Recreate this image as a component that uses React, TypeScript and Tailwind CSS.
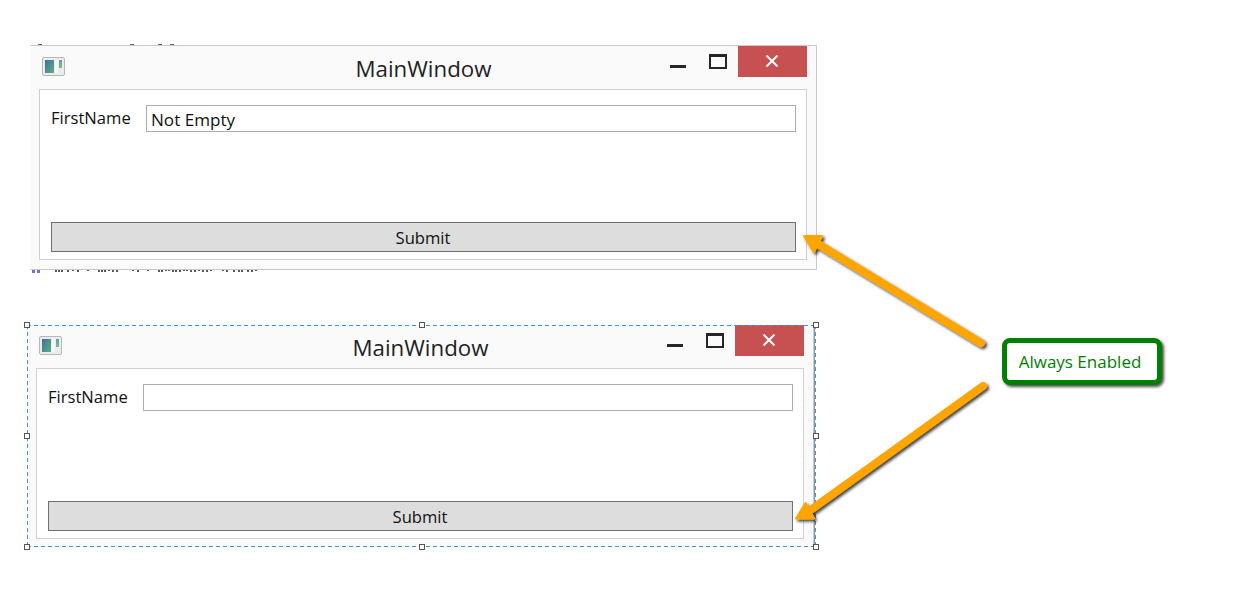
const font = "font-['Open_Sans','Noto_Sans',sans-serif]";

// leftovers of the editor text that peeks out above and below the first window
const topSpecks = [38, 40, 130, 132, 158, 160, 170, 172];
const bottomSpecks = [
  55, 58, 61, 67, 72, 77, 87, 98, 101, 104, 108, 112, 116, 132, 137, 147, 158, 161, 165, 168, 172, 175, 179,
  183, 186, 190, 194, 198, 202, 206, 210, 222, 226, 233, 238, 241, 247, 251, 255,
];

function AppIcon() {
  return (
    <div className="flex h-[19px] w-[23px] gap-[1px] rounded-[2px] border border-[#b4b8bc] bg-[#ececec] p-[2px]">
      <div className="h-full w-[10px] bg-gradient-to-br from-[#41709c] to-[#5fae7c]" />
      <div className="h-full w-[4px] bg-[#f7f7f7]" />
      <div className="h-[8px] w-[3px] bg-gradient-to-b from-[#6a9aae] to-[#74c090]" />
    </div>
  );
}

function DesignerWindow({ value }: { value: string }) {
  return (
    <div className={`flex h-[225px] w-[787px] flex-col border border-[#c9c9c9] border-l-[#fafafa] bg-[#fafafa] ${font}`}>
      <div className="grid h-[43px] shrink-0 grid-cols-[1fr_auto_1fr]">
        <div className="pl-[11px] pt-[11px]">
          <AppIcon />
        </div>
        <div className="pt-[7px] text-[22.3px] leading-[32px] text-[#222222]">MainWindow</div>
        <div className="flex items-start justify-end pr-[9px]">
          <div className="mt-[19px] h-[3px] w-[16px] bg-[#262626]" />
          <div className="ml-[23px] mt-[8px] h-[15px] w-[18px] border-2 border-t-[3px] border-[#262626]" />
          <div className="ml-[11px] flex h-[31px] w-[69px] items-center justify-center bg-[#c75050] pb-[1px] pr-[1px]">
            <svg width="14" height="12" viewBox="0 0 14 12">
              <path d="M1.5 0.5 12.5 11.5M12.5 0.5 1.5 11.5" stroke="#ffffff" strokeWidth="2" fill="none" />
            </svg>
          </div>
        </div>
      </div>
      <div className="ml-[8px] mr-[9px] flex h-[171px] flex-col justify-between border border-[#d0d0d0] bg-white pb-[7px] pl-[11px] pr-[10px] pt-[15px]">
        <div className="flex h-[27px] items-start">
          <div className="w-[95px] text-[16.6px] leading-[25px] text-[#111111]">FirstName</div>
          <div className="h-[27px] flex-1 border border-[#abadb3] bg-white pl-[4px] text-[17.1px] leading-[27px] text-[#111111]">{value}</div>
        </div>
        <div className="h-[30px] border border-[#707070] bg-[#dddddd] pr-[1px] text-center text-[16.6px] leading-[29px] text-[#111111]">Submit</div>
      </div>
    </div>
  );
}

function Handle({ className }: { className: string }) {
  return <div className={`absolute h-[6px] w-[6px] border border-[#555555] bg-white ${className}`} />;
}

function Overlay() {
  return (
    <svg className="pointer-events-none absolute left-0 top-0" width="1252" height="604">
      <defs>
        <filter id="sh" x="-10%" y="-10%" width="120%" height="120%">
          <feDropShadow dx="2" dy="2" stdDeviation="1.5" floodColor="#000000" floodOpacity="0.75" />
        </filter>
      </defs>
      {topSpecks.map((x, i) => (
        <rect key={x} x={x} y="44" width="2" height="1" fill={i % 2 ? "#2a5a9a" : "#b5651d"} />
      ))}
      <rect x="32" y="270" width="3" height="3" fill="#3030e0" opacity="0.7" />
      <rect x="37" y="270" width="3" height="3" fill="#3030e0" opacity="0.7" />
      {bottomSpecks.map((x) => (
        <rect key={x} x={x} y="270" width="2" height={x % 3 ? 2 : 1} fill="#222222" opacity="0.75" />
      ))}
      <g filter="url(#sh)">
        <path d="M981 343 818 244" stroke="#ffa500" strokeWidth="8" strokeLinecap="round" fill="none" />
        <path d="M804 236 822 236 814 252Z" fill="#ffa500" stroke="#ffa500" strokeWidth="2" strokeLinejoin="round" />
      </g>
      <g filter="url(#sh)">
        <path d="M983 386 812 509" stroke="#ffa500" strokeWidth="8" strokeLinecap="round" fill="none" />
        <path d="M796 518.5 805.5 503 814 518.5Z" fill="#ffa500" stroke="#ffa500" strokeWidth="2" strokeLinejoin="round" />
      </g>
    </svg>
  );
}

export default function App() {
  return (
    <div className="relative h-[604px] w-[1252px] overflow-hidden bg-white">
      <div className="pl-[30px] pt-[45px]">
        <DesignerWindow value="Not Empty" />
      </div>
      <div className="relative ml-[27px] mt-[55px] h-[222px] w-[789px]">
        <div className="h-full overflow-hidden">
          <div className="-mt-[1px]">
            <DesignerWindow value="" />
          </div>
        </div>
        <div className="absolute left-0 right-0 top-0 h-[1px] bg-[repeating-linear-gradient(90deg,#3d95e6_0_4px,transparent_4px_7px)]" />
        <div className="absolute bottom-0 left-0 right-0 h-[1px] bg-[repeating-linear-gradient(90deg,#3d95e6_0_4px,transparent_4px_7px)]" />
        <div className="absolute bottom-0 left-0 top-0 w-[1px] bg-[repeating-linear-gradient(180deg,#3d95e6_0_4px,transparent_4px_7px)]" />
        <div className="absolute bottom-0 right-[1px] top-0 w-[1px] bg-[#9a9a9a]" />
        <div className="absolute bottom-0 right-0 top-0 w-[1px] bg-[repeating-linear-gradient(180deg,#3d95e6_0_4px,transparent_4px_7px)]" />
        <Handle className="left-[-3px] top-[-3px]" />
        <Handle className="left-[392px] top-[-3px]" />
        <Handle className="right-[-3px] top-[-3px]" />
        <Handle className="left-[-3px] top-[108px]" />
        <Handle className="right-[-3px] top-[108px]" />
        <Handle className="bottom-[-3px] left-[-3px]" />
        <Handle className="bottom-[-3px] left-[392px]" />
        <Handle className="bottom-[-3px] right-[-3px]" />
      </div>
      <Overlay />
      <div className={`absolute left-[1002px] top-[338px] flex h-[47px] w-[160px] items-center justify-center rounded-[8px] border-[5px] border-[#008000] bg-white pr-[4px] pt-[1px] text-[17px] text-[#008000] shadow-[2px_2px_3px_rgba(0,0,0,0.7)] ${font}`}>
        Always Enabled
      </div>
    </div>
  );
}
